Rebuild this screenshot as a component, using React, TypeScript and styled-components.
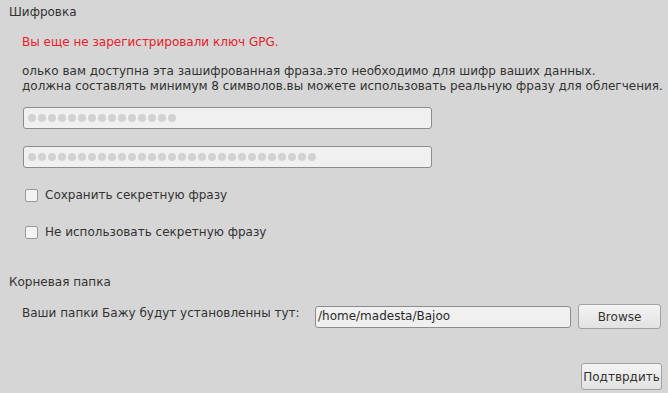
import styled, { createGlobalStyle } from 'styled-components'

const GlobalStyle = createGlobalStyle`
  html, body {
    margin: 0;
    padding: 0;
    background: #d6d6d6;
  }
`

const Window = styled.div`
  width: 668px;
  height: 393px;
  box-sizing: border-box;
  padding: 5px 6px 0 9px;
  display: flex;
  flex-direction: column;
  background: #d6d6d6;
  color: #333333;
  font-family: 'DejaVu Sans', sans-serif;
  font-size: 12px;
  line-height: 15px;
  overflow: hidden;
`

const SectionTitle = styled.div<{ $top?: number }>`
  margin-top: ${(p) => p.$top ?? 0}px;
`

const Indent = styled.div`
  padding-left: 13px;
  display: flex;
  flex-direction: column;
`

const Warning = styled.div`
  margin-top: 15px;
  color: #e8202c;
`

const Info = styled.div`
  margin-top: 14px;
  white-space: nowrap;
`

const PassField = styled.div<{ $top: number }>`
  margin-top: ${(p) => p.$top}px;
  margin-left: 1px;
  width: 409px;
  height: 22px;
  box-sizing: border-box;
  border: 1px solid #8c8c8c;
  border-radius: 3px;
  background: #f0f0f0;
  display: flex;
  align-items: center;
  padding-left: 4px;
  gap: 2px;
`

const Dot = styled.span`
  width: 8px;
  height: 8px;
  border-radius: 50%;
  background: #d2d2d2;
  filter: blur(0.4px);
`

const CheckRow = styled.label<{ $top: number }>`
  margin-top: ${(p) => p.$top}px;
  margin-left: 3px;
  display: flex;
  align-items: center;
  gap: 7px;
  height: 15px;
`

const Box = styled.span`
  width: 13px;
  height: 13px;
  box-sizing: border-box;
  border: 1px solid #9a9a9a;
  border-radius: 2px;
  background: #f3f3f3;
`

const FolderRow = styled.div`
  margin-top: 14px;
  display: flex;
  align-items: center;
`

const FolderLabel = styled.span`
  width: 293px;
  margin-top: -6px;
`

const PathField = styled.div`
  width: 256px;
  height: 22px;
  box-sizing: border-box;
  border: 1px solid #8c8c8c;
  border-radius: 3px;
  background: #f0f0f0;
  padding-left: 2px;
  display: flex;
  align-items: center;
  color: #2a2a2a;
`

const Button = styled.button<{ $w: number; $h: number }>`
  width: ${(p) => p.$w}px;
  height: ${(p) => p.$h}px;
  box-sizing: border-box;
  border: 1px solid #a2a2a2;
  border-radius: 3px;
  background: linear-gradient(#f4f4f4, #e2e2e2);
  font-family: 'DejaVu Sans', sans-serif;
  font-size: 12px;
  color: #333;
  padding: 0;
`

const Footer = styled.div`
  margin-top: 34px;
  display: flex;
  justify-content: flex-end;
`

const dots = (n: number) => Array.from({ length: n }, (_, i) => <Dot key={i} />)

const App = () => {
  return (
    <Window>
      <GlobalStyle />
      <SectionTitle>Шифровка</SectionTitle>
      <Indent>
        <Warning>Вы еще не зарегистрировали ключ GPG.</Warning>
        <Info>
          олько вам доступна эта зашифрованная фраза.это необходимо для шифр ваших данных.
          <br />
          должна составлять минимум 8 символов.вы можете использовать реальную фразу для облегчения.
        </Info>
        <PassField $top={13}>{dots(15)}</PassField>
        <PassField $top={17}>{dots(29)}</PassField>
        <CheckRow $top={20}>
          <Box />
          Сохранить секретную фразу
        </CheckRow>
        <CheckRow $top={22}>
          <Box />
          Не использовать секретную фразу
        </CheckRow>
      </Indent>
      <SectionTitle $top={35}>Корневая папка</SectionTitle>
      <Indent>
        <FolderRow>
          <FolderLabel>Ваши папки Бажу будут установленны тут:</FolderLabel>
          <PathField>/home/madesta/Bajoo</PathField>
          <Button $w={83} $h={25} style={{ marginLeft: 7 }}>Browse</Button>
        </FolderRow>
      </Indent>
      <Footer>
        <Button $w={81} $h={27}>Подтврдить</Button>
      </Footer>
    </Window>
  )
}

export default App
